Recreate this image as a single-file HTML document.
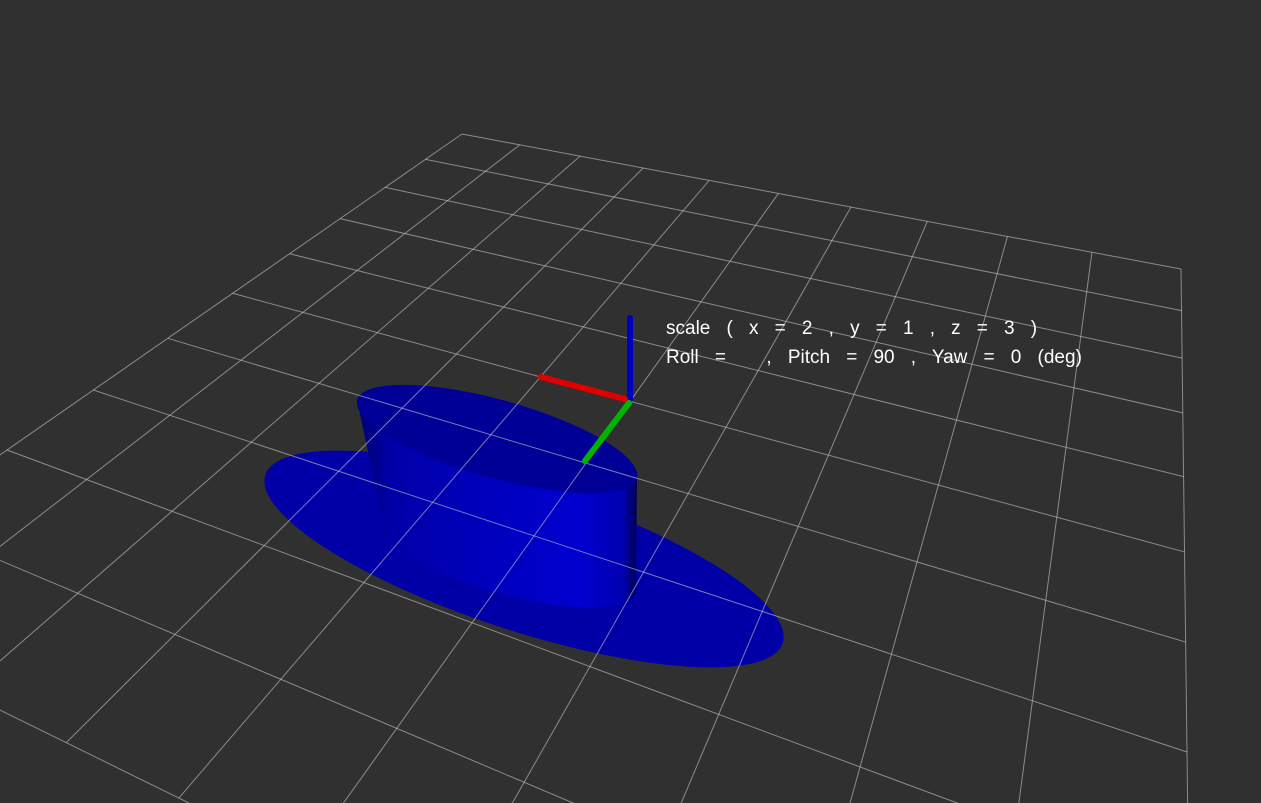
<!DOCTYPE html>
<html><head><meta charset="utf-8"><style>
html,body{margin:0;padding:0;background:#303030;width:1261px;height:803px;overflow:hidden}
svg{position:absolute;left:0;top:0}
.t{position:absolute;left:666px;color:#fff;font-family:"Liberation Sans",sans-serif;font-size:19px;white-space:pre;line-height:22px;word-spacing:2.8px}
</style></head><body>
<svg width="1261" height="803" viewBox="0 0 1261 803">
<defs>
<linearGradient id="side" x1="357" y1="0" x2="637" y2="0" gradientUnits="userSpaceOnUse">
<stop offset="0" stop-color="#000070"/><stop offset="0.12" stop-color="#0000a8"/>
<stop offset="0.8" stop-color="#0000d0"/><stop offset="0.95" stop-color="#0000b0"/><stop offset="1" stop-color="#000050"/>
</linearGradient>
</defs>
<ellipse cx="524" cy="559" rx="272" ry="72" transform="rotate(18 524 559)" fill="#0000a6"/>
<path d="M357,400 L384,526 A130,36 15 0 0 636,592 L637,478 A145,38 15.6 0 0 357,400 Z" fill="url(#side)"/>
<ellipse cx="497" cy="439" rx="145" ry="39" transform="rotate(15.6 497 439)" fill="#000096"/>
<g id="grid" stroke="rgba(200,200,200,0.6)" stroke-width="1" fill="none"></g>
<line x1="630" y1="318" x2="630" y2="399" stroke="#0000c0" stroke-width="6" stroke-linecap="round"/>
<line x1="541" y1="377" x2="625" y2="399" stroke="#e00000" stroke-width="6" stroke-linecap="round"/>
<line x1="629" y1="403" x2="585" y2="461" stroke="#00b400" stroke-width="6" stroke-linecap="round"/>
</svg>
<div class="t" style="top:318px">scale  (  x  =  2  ,  y  =  1  ,  z  =  3  )</div>
<div class="t" style="top:347px">Roll  =     ,  Pitch  =  90  ,  Yaw  =  0  (deg)</div>
<script>
(function(){
var src=[[0,0],[10,0],[0,8],[10,7]],dst=[[462,134],[1181,269],[7,450],[1187,752]];
var A=[],b=[];
for(var i=0;i<4;i++){var u=src[i][0],v=src[i][1],x=dst[i][0],y=dst[i][1];
A.push([u,v,1,0,0,0,-u*x,-v*x]);b.push(x);
A.push([0,0,0,u,v,1,-u*y,-v*y]);b.push(y);}
var n=8;for(var c=0;c<n;c++){var p=c;for(var r=c+1;r<n;r++)if(Math.abs(A[r][c])>Math.abs(A[p][c]))p=r;
var t=A[c];A[c]=A[p];A[p]=t;t=b[c];b[c]=b[p];b[p]=t;
for(var r=0;r<n;r++)if(r!=c){var f=A[r][c]/A[c][c];for(var k=c;k<n;k++)A[r][k]-=f*A[c][k];b[r]-=f*b[c];}}
var h=[];for(var i=0;i<n;i++)h.push(b[i]/A[i][i]);
function P(u,v){var w=h[6]*u+h[7]*v+1;return [(h[0]*u+h[1]*v+h[2])/w,(h[3]*u+h[4]*v+h[5])/w];}
var g=document.getElementById('grid'),s='';
for(var i=0;i<=10;i++){var a=P(i,0),e=P(i,10);s+='<line x1="'+a[0]+'" y1="'+a[1]+'" x2="'+e[0]+'" y2="'+e[1]+'"/>';
a=P(0,i);e=P(10,i);s+='<line x1="'+a[0]+'" y1="'+a[1]+'" x2="'+e[0]+'" y2="'+e[1]+'"/>';}
g.innerHTML=s;
})();
</script>
</body></html>
